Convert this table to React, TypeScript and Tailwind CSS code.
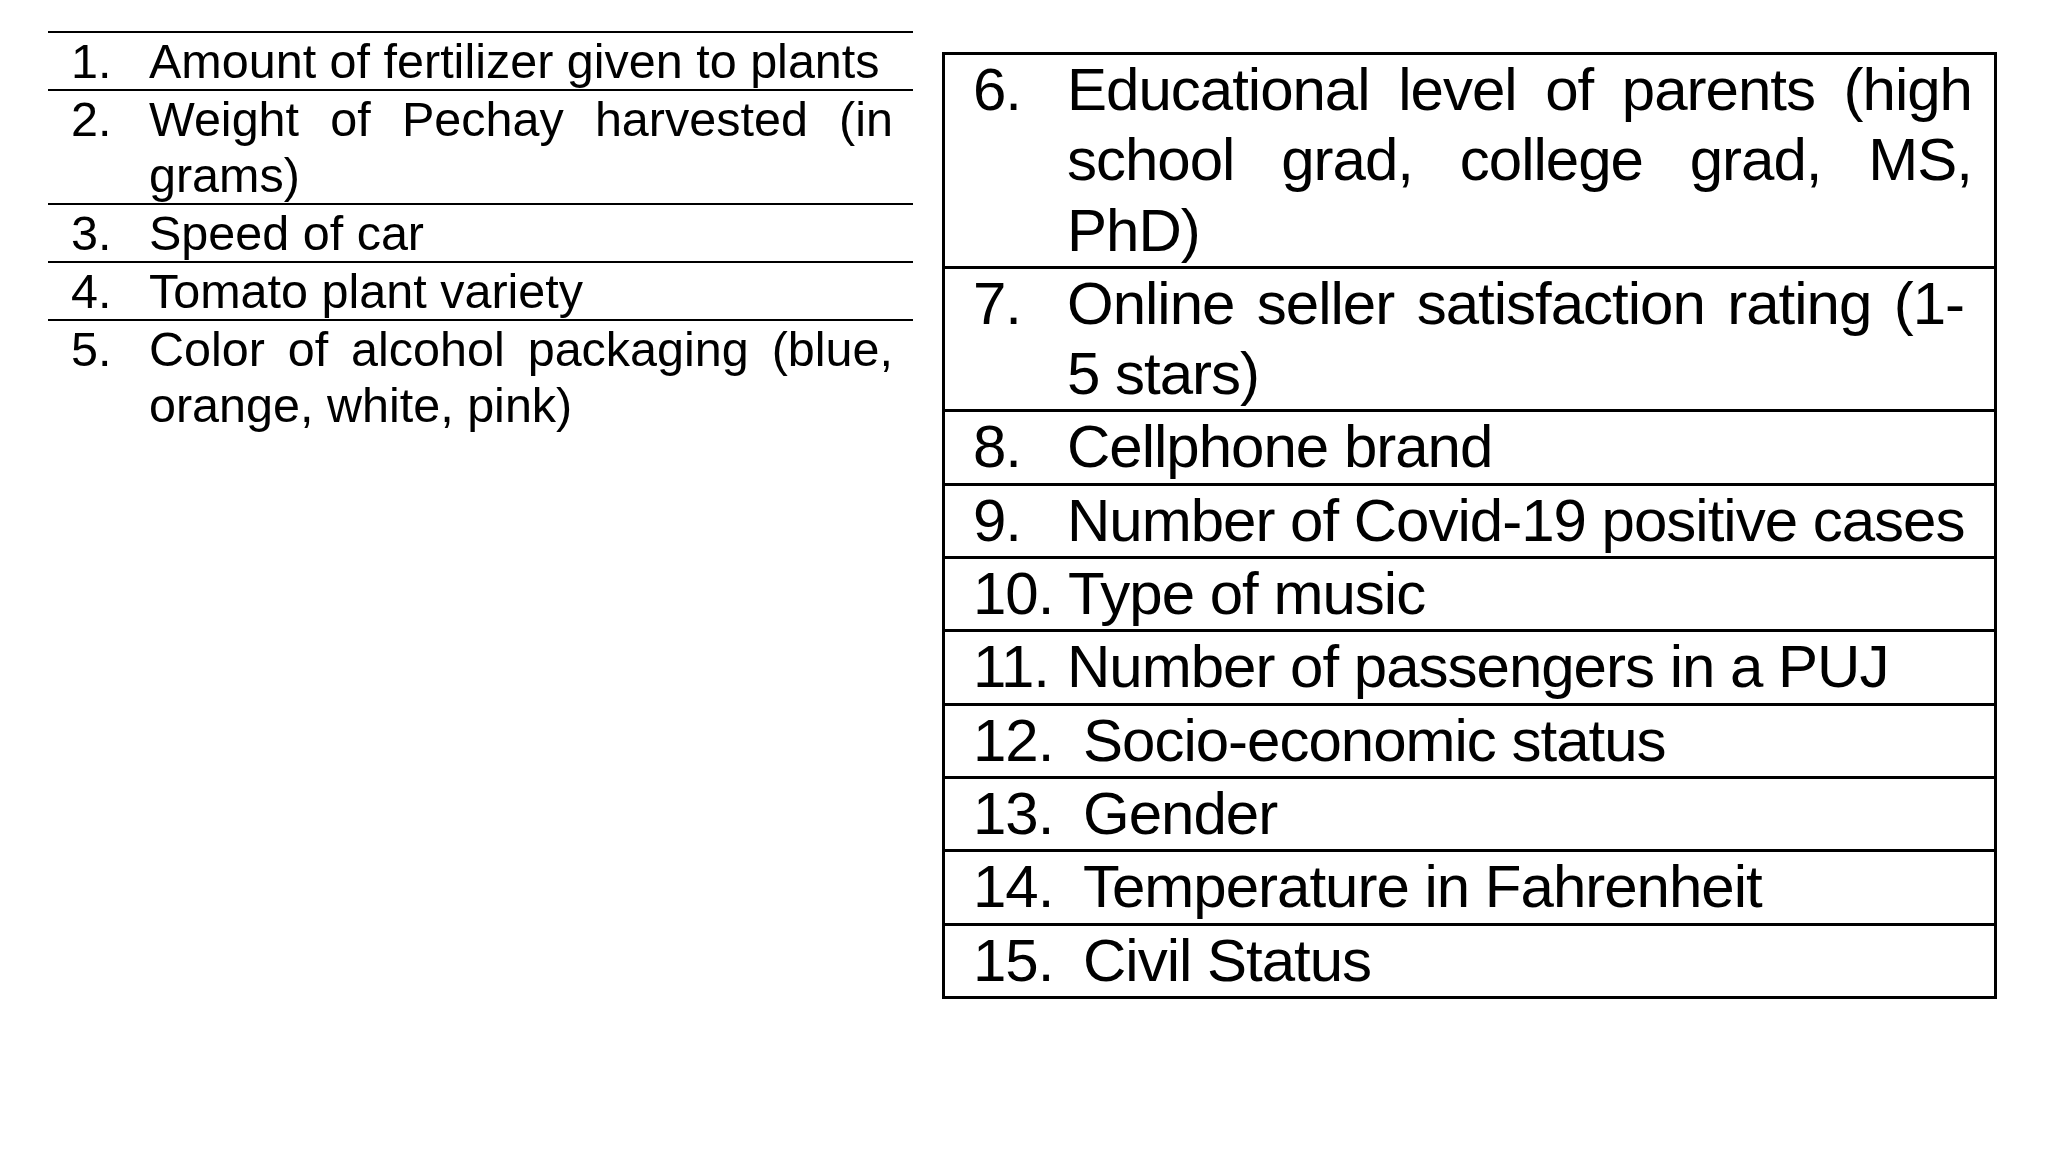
const leftItems = [
  { num: "1.", text: "Amount of fertilizer given to plants" },
  { num: "2.", text: "Weight of Pechay harvested (in grams)" },
  { num: "3.", text: "Speed of car" },
  { num: "4.", text: "Tomato plant variety" },
  { num: "5.", text: "Color of alcohol packaging (blue, orange, white, pink)" },
];

// numW = width reserved for the number before the text starts
const rightItems = [
  { num: "6.", text: "Educational level of parents (high school grad, college grad, MS, PhD)", numW: "w-[94px]", pr: "pr-[22px]", wrap: true },
  { num: "7.", text: "Online seller satisfaction rating (1-\u200B5 stars)", numW: "w-[94px]", pr: "pr-[30px]", wrap: true },
  { num: "8.", text: "Cellphone brand", numW: "w-[94px]", pr: "pr-[22px]" },
  { num: "9.", text: "Number of Covid-19 positive cases", numW: "w-[94px]", pr: "pr-[22px]" },
  { num: "10.", text: "Type of music", numW: "w-[95px]", pr: "pr-[22px]" },
  { num: "11.", text: "Number of passengers in a PUJ", numW: "w-[94px]", pr: "pr-[22px]" },
  { num: "12.", text: "Socio-economic status", numW: "w-[110px]", pr: "pr-[22px]" },
  { num: "13.", text: "Gender", numW: "w-[110px]", pr: "pr-[22px]" },
  { num: "14.", text: "Temperature in Fahrenheit", numW: "w-[110px]", pr: "pr-[22px]" },
  { num: "15.", text: "Civil Status", numW: "w-[110px]", pr: "pr-[22px]" },
];

export default function App() {
  return (
    <div
      className="flex h-[1152px] w-[2048px] items-start bg-white text-black"
      style={{ fontFamily: '"Liberation Sans", Arial, sans-serif' }}
    >
      {/* left list: horizontal rules only */}
      <div className="ml-[48px] mt-[31px] w-[865px] border-t-2 border-black">
        {leftItems.map((item, i) => (
          <div
            key={item.num}
            className={`flex pl-[23px] pr-[20px] text-[48.5px] leading-[56px] ${
              i < leftItems.length - 1 ? "border-b-2 border-black" : ""
            }`}
          >
            <span className="w-[78px] shrink-0">{item.num}</span>
            <span className="flex-1 text-justify">{item.text}</span>
          </div>
        ))}
      </div>

      {/* right list: boxed table */}
      <div className="ml-[29px] mt-[52px] w-[1055px] divide-y-[3px] divide-black border-[3px] border-black">
        {rightItems.map((item) => (
          <div
            key={item.num}
            className={`flex pl-[28px] text-[60px] leading-[70.3px] tracking-[-1px] ${item.pr}`}
          >
            <span className={`shrink-0 ${item.numW}`}>{item.num}</span>
            <span className={`flex-1 text-justify ${item.wrap ? "" : "whitespace-nowrap"}`}>
              {item.text}
            </span>
          </div>
        ))}
      </div>
    </div>
  );
}
